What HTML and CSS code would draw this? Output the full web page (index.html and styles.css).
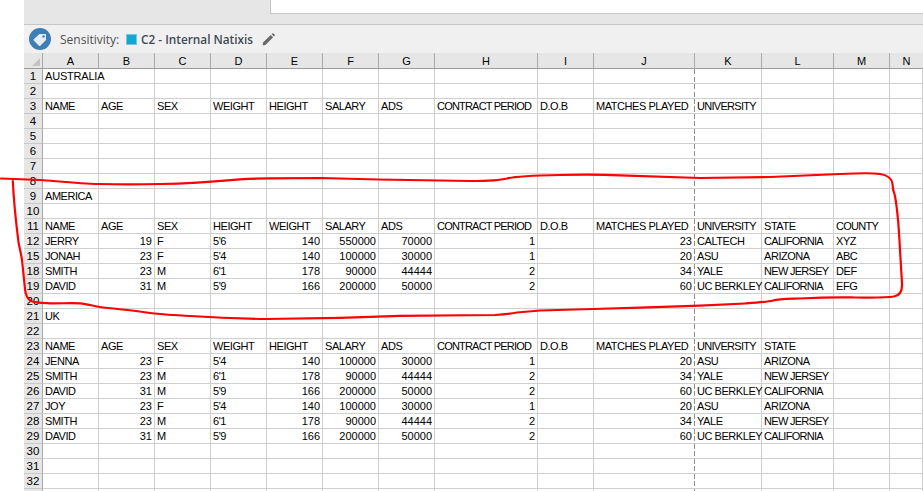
FILE: index.html
```html
<!DOCTYPE html>
<html lang="en">
<head>
<meta charset="utf-8">
<title>Sensitivity sheet</title>
<link rel="stylesheet" href="styles.css">
</head>
<body>
<div class="app">
<header class="ribbon"><div class="namebox"></div></header>
<div class="sensbar">
<svg class="tagicon" width="22" height="22" viewBox="0 0 22 22"><circle cx="11" cy="11" r="11" fill="#3f7db5"/><path d="M10.500 6H16a1 1 0 0 1 1 1V12L11.300 17.700a1 1 0 0 1-1.400 0L4.800 12.600a1 1 0 0 1 0-1.400Z" fill="#e4ecf4"/><circle cx="14.500" cy="8.500" r="1.200" fill="#3f7db5"/></svg>
<span class="senslabel">Sensitivity:</span>
<span class="swatch"></span>
<strong class="sensvalue">C2 - Internal Natixis</strong>
<svg class="pencil" width="13" height="13" viewBox="0 0 13 13"><path d="M0.500 12.500L1.300 9.300 8.700 1.900 11.100 4.300 3.700 11.700Z" fill="#6a6a6a"/><path d="M9.500 1.100L10.300 0.400a0.800 0.800 0 0 1 1.100 0L12.600 1.600a0.800 0.800 0 0 1 0 1.100L11.900 3.500Z" fill="#6a6a6a"/></svg>
</div>
<main class="sheet">
<table class="grid">
<colgroup><col class="c-row"><col class="c-56"><col class="c-56"><col class="c-56"><col class="c-56"><col class="c-56"><col class="c-56"><col class="c-56"><col class="c-h"><col class="c-56"><col class="c-j"><col class="c-k"><col class="c-l"><col class="c-56"><col class="c-n"></colgroup>
<thead><tr><th class="corner"><span class="tri"></span></th><th>A</th><th>B</th><th>C</th><th>D</th><th>E</th><th>F</th><th>G</th><th>H</th><th>I</th><th>J</th><th>K</th><th>L</th><th>M</th><th>N</th></tr></thead>
<tbody>
<tr><th>1</th><td class="spill">AUSTRALIA</td><td></td><td></td><td></td><td></td><td></td><td></td><td></td><td></td><td></td><td></td><td></td><td></td><td></td></tr>
<tr><th>2</th><td></td><td></td><td></td><td></td><td></td><td></td><td></td><td></td><td></td><td></td><td></td><td></td><td></td><td></td></tr>
<tr><th>3</th><td>NAME</td><td>AGE</td><td>SEX</td><td>WEIGHT</td><td>HEIGHT</td><td>SALARY</td><td>ADS</td><td class="tighter">CONTRACT PERIOD</td><td>D.O.B</td><td>MATCHES PLAYED</td><td class="tight">UNIVERSITY</td><td></td><td></td><td></td></tr>
<tr><th>4</th><td></td><td></td><td></td><td></td><td></td><td></td><td></td><td></td><td></td><td></td><td></td><td></td><td></td><td></td></tr>
<tr><th>5</th><td></td><td></td><td></td><td></td><td></td><td></td><td></td><td></td><td></td><td></td><td></td><td></td><td></td><td></td></tr>
<tr><th>6</th><td></td><td></td><td></td><td></td><td></td><td></td><td></td><td></td><td></td><td></td><td></td><td></td><td></td><td></td></tr>
<tr><th>7</th><td></td><td></td><td></td><td></td><td></td><td></td><td></td><td></td><td></td><td></td><td></td><td></td><td></td><td></td></tr>
<tr><th>8</th><td></td><td></td><td></td><td></td><td></td><td></td><td></td><td></td><td></td><td></td><td></td><td></td><td></td><td></td></tr>
<tr><th>9</th><td>AMERICA</td><td></td><td></td><td></td><td></td><td></td><td></td><td></td><td></td><td></td><td></td><td></td><td></td><td></td></tr>
<tr><th>10</th><td></td><td></td><td></td><td></td><td></td><td></td><td></td><td></td><td></td><td></td><td></td><td></td><td></td><td></td></tr>
<tr><th>11</th><td>NAME</td><td>AGE</td><td>SEX</td><td>HEIGHT</td><td>WEIGHT</td><td>SALARY</td><td>ADS</td><td class="tighter">CONTRACT PERIOD</td><td>D.O.B</td><td>MATCHES PLAYED</td><td class="tight">UNIVERSITY</td><td>STATE</td><td class="tight">COUNTY</td><td></td></tr>
<tr><th>12</th><td>JERRY</td><td class="num">19</td><td>F</td><td>5'6</td><td class="num">140</td><td class="num">550000</td><td class="num">70000</td><td class="num">1</td><td></td><td class="num">23</td><td>CALTECH</td><td class="tight">CALIFORNIA</td><td>XYZ</td><td></td></tr>
<tr><th>15</th><td>JONAH</td><td class="num">23</td><td>F</td><td>5'4</td><td class="num">140</td><td class="num">100000</td><td class="num">30000</td><td class="num">1</td><td></td><td class="num">20</td><td>ASU</td><td>ARIZONA</td><td>ABC</td><td></td></tr>
<tr><th>18</th><td>SMITH</td><td class="num">23</td><td>M</td><td>6'1</td><td class="num">178</td><td class="num">90000</td><td class="num">44444</td><td class="num">2</td><td></td><td class="num">34</td><td>YALE</td><td class="tight">NEW JERSEY</td><td>DEF</td><td></td></tr>
<tr><th>19</th><td>DAVID</td><td class="num">31</td><td>M</td><td>5'9</td><td class="num">166</td><td class="num">200000</td><td class="num">50000</td><td class="num">2</td><td></td><td class="num">60</td><td>UC BERKLEY</td><td class="tight">CALIFORNIA</td><td>EFG</td><td></td></tr>
<tr><th>20</th><td></td><td></td><td></td><td></td><td></td><td></td><td></td><td></td><td></td><td></td><td></td><td></td><td></td><td></td></tr>
<tr><th>21</th><td>UK</td><td></td><td></td><td></td><td></td><td></td><td></td><td></td><td></td><td></td><td></td><td></td><td></td><td></td></tr>
<tr><th>22</th><td></td><td></td><td></td><td></td><td></td><td></td><td></td><td></td><td></td><td></td><td></td><td></td><td></td><td></td></tr>
<tr><th>23</th><td>NAME</td><td>AGE</td><td>SEX</td><td>WEIGHT</td><td>HEIGHT</td><td>SALARY</td><td>ADS</td><td class="tighter">CONTRACT PERIOD</td><td>D.O.B</td><td>MATCHES PLAYED</td><td class="tight">UNIVERSITY</td><td>STATE</td><td></td><td></td></tr>
<tr><th>24</th><td>JENNA</td><td class="num">23</td><td>F</td><td>5'4</td><td class="num">140</td><td class="num">100000</td><td class="num">30000</td><td class="num">1</td><td></td><td class="num">20</td><td>ASU</td><td>ARIZONA</td><td></td><td></td></tr>
<tr><th>25</th><td>SMITH</td><td class="num">23</td><td>M</td><td>6'1</td><td class="num">178</td><td class="num">90000</td><td class="num">44444</td><td class="num">2</td><td></td><td class="num">34</td><td>YALE</td><td class="tight">NEW JERSEY</td><td></td><td></td></tr>
<tr><th>26</th><td>DAVID</td><td class="num">31</td><td>M</td><td>5'9</td><td class="num">166</td><td class="num">200000</td><td class="num">50000</td><td class="num">2</td><td></td><td class="num">60</td><td>UC BERKLEY</td><td class="tight">CALIFORNIA</td><td></td><td></td></tr>
<tr><th>27</th><td>JOY</td><td class="num">23</td><td>F</td><td>5'4</td><td class="num">140</td><td class="num">100000</td><td class="num">30000</td><td class="num">1</td><td></td><td class="num">20</td><td>ASU</td><td>ARIZONA</td><td></td><td></td></tr>
<tr><th>28</th><td>SMITH</td><td class="num">23</td><td>M</td><td>6'1</td><td class="num">178</td><td class="num">90000</td><td class="num">44444</td><td class="num">2</td><td></td><td class="num">34</td><td>YALE</td><td class="tight">NEW JERSEY</td><td></td><td></td></tr>
<tr><th>29</th><td>DAVID</td><td class="num">31</td><td>M</td><td>5'9</td><td class="num">166</td><td class="num">200000</td><td class="num">50000</td><td class="num">2</td><td></td><td class="num">60</td><td>UC BERKLEY</td><td class="tight">CALIFORNIA</td><td></td><td></td></tr>
<tr><th>30</th><td></td><td></td><td></td><td></td><td></td><td></td><td></td><td></td><td></td><td></td><td></td><td></td><td></td><td></td></tr>
<tr><th>31</th><td></td><td></td><td></td><td></td><td></td><td></td><td></td><td></td><td></td><td></td><td></td><td></td><td></td><td></td></tr>
<tr><th>32</th><td></td><td></td><td></td><td></td><td></td><td></td><td></td><td></td><td></td><td></td><td></td><td></td><td></td><td></td></tr>
<tr><th></th><td></td><td></td><td></td><td></td><td></td><td></td><td></td><td></td><td></td><td></td><td></td><td></td><td></td><td></td></tr>
</tbody>
</table>
</main>
</div>
<svg class="markup" width="923" height="491" viewBox="0 0 923 491">
<path d="M1 178.500L40 180C60 181.500 80 183.500 99 184C120 184.500 140 184.500 160 184C185 183.500 215 181.500 240 179.300C250 178.700 258 178.500 270 178.400L320 178L378 179.500L470 181C490 181 500 180.500 507 178.500C514 176.300 525 175.700 560 175C580 174.600 600 174.500 620 175.300L700 178L770 177L840 174C860 173 873 172.800 880 174C888 175.500 892 178 892.500 184C892.700 190 893 191 894.500 194C897 205 899 230 900 250L902 283C902.500 291 900 295.500 894 296.500C885 298 870 297.500 855 297.500C840 297.300 830 297 800 298.500C785 299 778 299 773 300.500C768 302 760 302.500 745 303.500L700 305.700L640 307.700L593 309L540 310.500L517 312.500C510 314 505 314.500 495 315L400 315.800L340 317.800L266 319C240 318.500 215 317.500 190 316C175 315 160 314.500 150 313C135 310.500 115 309 100 307C92 305.500 87 304 80 303.300C70 302.900 60 303.500 50 303.300C42 303 35 303 31 301C27 298.500 25.500 295 25 289L22 260C20.500 250 18.500 245 18 238C16 222 14 205 12.800 181" fill="none" stroke="#f00" stroke-width="2.200" stroke-linecap="round" stroke-linejoin="round"/>
</svg>
</body>
</html>
```
FILE: styles.css
```css
* { box-sizing: border-box; }
html, body { margin: 0; padding: 0; height: 100%; overflow: hidden; background: #fff; }
body { position: relative; width: 923px; height: 491px; font-family: "Liberation Sans", Arial, sans-serif; }
.app { margin-left: 24px; height: 491px; display: flex; flex-direction: column; overflow: hidden; }
.ribbon { flex: 0 0 25px; background: #e6e6e6; border-bottom: 1px solid #c6c6c6; padding-left: 246px; }
.namebox { height: 14px; background: #fff; border-left: 1px solid #c6c6c6; border-bottom: 1px solid #c6c6c6; }
.sensbar { flex: 0 0 28px; background: #f0f0f0; display: flex; align-items: center; padding-left: 5px; font-family: "Open Sans", "Noto Sans", sans-serif; }
.tagicon { flex: none; margin-right: 9px; }
.senslabel { color: #505050; width: 66px; font-size: 12px; }
.swatch { width: 11px; height: 11px; background: #15a7d1; border: 1px solid #75c8e2; margin-right: 4px; }
.sensvalue { color: #3f4a57; font-size: 11.800px; font-weight: 600; width: 122px; white-space: nowrap; }
.pencil { flex: none; margin-left: -1px; }
.sheet { flex: 1; overflow: hidden; }
.grid { border-collapse: separate; border-spacing: 0; table-layout: fixed; width: 899px; font-size: 11px; color: #000; }
.c-row { width: 19px; }
.c-56 { width: 56px; }
.c-h { width: 103px; }
.c-j { width: 101px; }
.c-k { width: 67px; }
.c-l { width: 72px; }
.c-n { width: 33px; }
th, td { padding: 0; font-weight: 400; white-space: nowrap; line-height: 14px; height: 15px; }
thead th { height: 16px; background: #e6e6e6; text-align: center; border-right: 1px solid #a9a9a9; border-bottom: 1px solid #9c9c9c; }
thead th:last-child { border-right: 0; }
.corner { position: relative; }
.tri { position: absolute; right: 2px; bottom: 2px; width: 0; height: 0; border-left: 8px solid transparent; border-bottom: 8px solid #c4c4c4; }
tbody th { background: #e6e6e6; text-align: center; border-right: 1px solid #a9a9a9; border-bottom: 1px solid #c8c8c8; font-size: 11.500px; }
td { padding: 0 2px; border-right: 1px solid #cfcfcf; border-bottom: 1px solid #cfcfcf; text-align: left; letter-spacing: -0.45px; }
td.num { text-align: right; letter-spacing: 0; }
td.tight { letter-spacing: -0.7px; }
td.tighter { letter-spacing: -0.8px; }
td.spill { border-right-color: transparent; letter-spacing: -0.2px; }
td:nth-child(11) { border-right: 0; padding-right: 3px; background: repeating-linear-gradient(#8e8e8e 0 5px, transparent 5px 7.500px) right top / 1px 15px repeat-y; }
.markup { position: absolute; left: 0; top: 0; pointer-events: none; }
```
